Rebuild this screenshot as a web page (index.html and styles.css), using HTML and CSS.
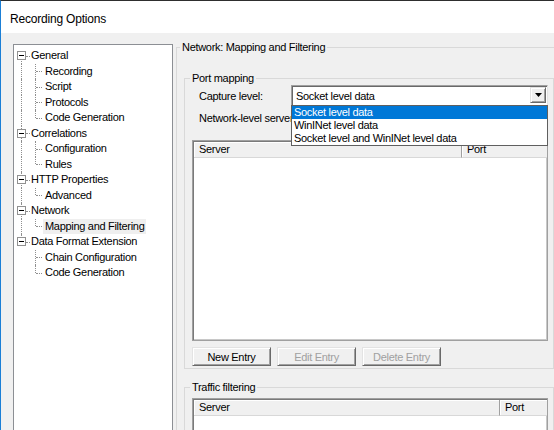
FILE: index.html
```html
<!DOCTYPE html>
<html lang="en">
<head>
<meta charset="utf-8">
<title>Recording Options</title>
<link rel="stylesheet" href="styles.css">
</head>
<body>
<div class="window">
  <div class="titlebar"><span class="title">Recording Options</span></div>
  <div class="client">
    <div class="tree">
      <ul class="tree-list">
        <li class="node"><span class="gut g-root exp first"><i class="box"></i></span><span class="lbl">General</span></li>
        <li class="node"><span class="gut g0 v"></span><span class="gut g1 v h"></span><span class="lbl">Recording</span></li>
        <li class="node"><span class="gut g0 v"></span><span class="gut g1 v h"></span><span class="lbl">Script</span></li>
        <li class="node"><span class="gut g0 v"></span><span class="gut g1 v h"></span><span class="lbl">Protocols</span></li>
        <li class="node"><span class="gut g0 v"></span><span class="gut g1 v end h"></span><span class="lbl">Code Generation</span></li>
        <li class="node"><span class="gut g-root exp mid"><i class="box"></i></span><span class="lbl">Correlations</span></li>
        <li class="node"><span class="gut g0 v"></span><span class="gut g1 v h"></span><span class="lbl">Configuration</span></li>
        <li class="node"><span class="gut g0 v"></span><span class="gut g1 v end h"></span><span class="lbl">Rules</span></li>
        <li class="node"><span class="gut g-root exp mid"><i class="box"></i></span><span class="lbl">HTTP Properties</span></li>
        <li class="node"><span class="gut g0 v"></span><span class="gut g1 v end h"></span><span class="lbl">Advanced</span></li>
        <li class="node"><span class="gut g-root exp mid"><i class="box"></i></span><span class="lbl">Network</span></li>
        <li class="node"><span class="gut g0 v"></span><span class="gut g1 v end h"></span><span class="lbl selected">Mapping and Filtering</span></li>
        <li class="node"><span class="gut g-root exp last"><i class="box"></i></span><span class="lbl">Data Format Extension</span></li>
        <li class="node"><span class="gut g0"></span><span class="gut g1 v h"></span><span class="lbl">Chain Configuration</span></li>
        <li class="node"><span class="gut g0"></span><span class="gut g1 v end h"></span><span class="lbl">Code Generation</span></li>
      </ul>
    </div>

    <fieldset class="group outer">
      <legend class="outer-legend">Network: Mapping and Filtering</legend>

      <fieldset class="group inner port">
        <legend class="inner-legend">Port mapping</legend>
        <div class="field-row">
          <span class="field-label">Capture level:</span>
          <div class="combo">
            <span class="combo-value">Socket level data</span>
            <span class="combo-btn"><svg width="7" height="4" viewBox="0 0 7 4"><path d="M0 0H7L3.5 4Z" fill="#000"/></svg></span>
            <ul class="combo-list">
              <li class="combo-item sel">Socket level data</li>
              <li class="combo-item">WinINet level data</li>
              <li class="combo-item">Socket level and WinINet level data</li>
            </ul>
          </div>
        </div>
        <div class="text-row">Network-level server</div>
        <div class="listview lv-port">
          <div class="lv-header">
            <span class="lv-col col-server-1">Server</span>
            <span class="lv-col col-port">Port</span>
          </div>
        </div>
        <div class="buttons">
          <button class="btn" type="button">New Entry</button>
          <button class="btn" type="button" disabled>Edit Entry</button>
          <button class="btn" type="button" disabled>Delete Entry</button>
        </div>
      </fieldset>

      <fieldset class="group inner traffic">
        <legend class="inner-legend">Traffic filtering</legend>
        <div class="listview lv-traffic">
          <div class="lv-header">
            <span class="lv-col col-server-2">Server</span>
            <span class="lv-col col-port">Port</span>
          </div>
        </div>
      </fieldset>
    </fieldset>
  </div>
</div>
</body>
</html>
```
FILE: styles.css
```css
* { box-sizing: border-box; }

html, body {
  margin: 0;
  padding: 0;
}

body {
  width: 554px;
  height: 430px;
  overflow: hidden;
  background: #f0f0f0;
  font-family: "Liberation Sans", Arial, sans-serif;
  font-size: 11px;
  letter-spacing: -0.3px;
  color: #000;
}

.window {
  width: 554px;
  height: 430px;
  border-top: 1px solid #2e2e2e;
  border-left: 1px solid #1b7fd6;
  overflow: hidden;
  display: flex;
  flex-direction: column;
}

.titlebar {
  flex: none;
  height: 32px;
  background: #fff;
  display: flex;
  align-items: center;
  padding-left: 9px;
  padding-top: 3px;
}

.title {
  font-size: 12px;
  letter-spacing: -0.2px;
}

.client {
  flex: 1;
  min-height: 0;
  display: flex;
  align-items: flex-start;
  padding-top: 7px;
  padding-left: 12px;
  background: #f0f0f0;
}

/* ---------- tree ---------- */
.tree {
  flex: none;
  width: 160px;
  height: 420px;
  margin-top: 4px;
  background: #fff;
  border: 1px solid #8c8f94;
  padding-top: 3px;
}

.tree-list {
  list-style: none;
  margin: 0;
  padding: 0;
}

.node {
  display: flex;
  align-items: center;
  height: 15.5px;
  white-space: nowrap;
  line-height: 13px;
}

.gut {
  position: relative;
  flex: none;
  align-self: stretch;
}

.g-root { width: 15px; }
.g0 { width: 14px; }
.g1 { width: 15px; }

.v::before {
  content: "";
  position: absolute;
  left: 7px;
  top: 0;
  bottom: 0;
  border-left: 1px dotted #8f8f8f;
}

.v.end::before { bottom: 50%; }

.h::after {
  content: "";
  position: absolute;
  left: 8px;
  top: 50%;
  width: 6px;
  border-top: 1px dotted #8f8f8f;
}

.exp::before {
  content: "";
  position: absolute;
  left: 7px;
  border-left: 1px dotted #8f8f8f;
}

.exp.first::before { top: 50%; bottom: 0; }
.exp.mid::before { top: 0; bottom: 0; }
.exp.last::before { top: 0; bottom: 50%; }

.exp::after {
  content: "";
  position: absolute;
  left: 12px;
  top: 50%;
  width: 4px;
  border-top: 1px dotted #8f8f8f;
}

.box {
  position: absolute;
  left: 3px;
  top: 3px;
  width: 9px;
  height: 9px;
  border: 1px solid #919191;
  background: #fff;
  z-index: 1;
}

.box::before {
  content: "";
  position: absolute;
  left: 1px;
  top: 3px;
  width: 5px;
  height: 1px;
  background: #000;
}

.lbl {
  padding: 1px 2px;
}

.lbl.selected {
  background: #efefef;
}

/* ---------- group boxes ---------- */
.group {
  margin: 0;
  min-width: 0;
  border: 1px solid #d9d9d9;
}

.group legend {
  line-height: 14px;
  padding: 0 2px;
}

.outer {
  flex: none;
  width: 386px;
  height: 420px;
  margin-left: 3px;
  padding: 0 7px 0 7px;
}

.outer-legend {
  margin-left: -4px;
}

.inner {
  width: 370px;
  padding: 0 0 2px 7px;
}

.inner-legend {
  margin-left: -2px;
}

.port {
  margin-top: 17px;
}

.traffic {
  margin-top: 11px;
  padding-bottom: 0;
  height: 80px;
}

.field-row {
  display: flex;
  align-items: center;
  height: 21px;
  padding-left: 7px;
}

.field-label {
  flex: none;
  width: 92px;
}

.combo {
  position: relative;
  flex: none;
  width: 257px;
  height: 21px;
  display: flex;
  align-items: flex-start;
  justify-content: space-between;
  padding: 1px 1px 0 0;
  background: #fff;
  border: 1px solid;
  border-color: #a0a0a0 #e3e3e3 #e3e3e3 #a0a0a0;
  box-shadow: inset 1px 1px 0 #696969;
}

.combo-value {
  padding-left: 4px;
  line-height: 18px;
}

.combo-btn {
  flex: none;
  width: 16px;
  height: 16px;
  display: flex;
  align-items: center;
  justify-content: center;
  background: #f0f0f0;
  border: 1px solid;
  border-color: #e3e3e3 #696969 #696969 #e3e3e3;
  box-shadow: inset 1px 1px 0 #fff, inset -1px -1px 0 #a0a0a0;
}

.combo-list {
  position: absolute;
  left: -1px;
  right: -1px;
  top: 100%;
  margin: 0;
  padding: 0;
  list-style: none;
  background: #fff;
  border: 1px solid #5f5f5f;
  z-index: 5;
}

.combo-item {
  height: 13px;
  line-height: 13px;
  padding-left: 2px;
  white-space: nowrap;
}

.combo-item.sel {
  background: #0078d7;
  color: #fff;
}

.text-row {
  margin-top: 5px;
  line-height: 14px;
  padding-left: 7px;
  white-space: nowrap;
}

/* ---------- list views ---------- */
.listview {
  width: 356px;
  background: #fff;
  border: 1px solid #a0a0a0;
  box-shadow: inset 1px 1px 0 #7a7a7a, inset -1px -1px 0 #c8c8c8;
  padding: 1px 0 0 1px;
}

.lv-port {
  margin-top: 15px;
  height: 201px;
}

.lv-traffic {
  margin-top: 4px;
  height: 60px;
}

.lv-header {
  display: flex;
  height: 16px;
  background: #f0f0f0;
}

.lv-col {
  flex: none;
  line-height: 15px;
  padding-left: 5px;
  border-right: 1px solid #a0a0a0;
  border-bottom: 1px solid #d8d8d8;
  box-shadow: inset 1px 1px 0 #fff;
  white-space: nowrap;
}

.col-server-1 { width: 268px; }
.col-server-2 { width: 306px; }
.col-port { flex: 1; border-right: none; }

/* ---------- buttons ---------- */
.buttons {
  display: flex;
  margin-top: 6px;
}

.btn {
  flex: none;
  width: 79px;
  height: 19px;
  margin: 0 6px 0 0;
  padding: 0;
  font-family: inherit;
  font-size: 11px;
  letter-spacing: -0.3px;
  color: #000;
  background: #f0f0f0;
  border: 1px solid;
  border-color: #e3e3e3 #696969 #696969 #e3e3e3;
  box-shadow: inset 1px 1px 0 #fff, inset -1px -1px 0 #a0a0a0;
  border-radius: 0;
}

.btn:disabled {
  color: #a0a0a0;
}
```
